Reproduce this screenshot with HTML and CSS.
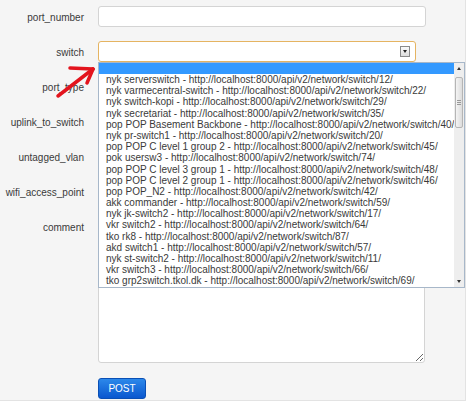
FILE: index.html
```html
<!DOCTYPE html>
<html>
<head>
<meta charset="utf-8">
<link rel="stylesheet" href="styles.css">
</head>
<body>
<div class="panel">
  <form class="form">
    <div class="row"><label class="lbl">port_number</label><input class="input" type="text"></div>
    <div class="row"><label class="lbl">switch</label>
      <div class="select-wrap">
        <div class="select"><span class="select-btn"></span></div>
        <div class="dropdown">
          <div class="options">
            <div class="opt sel">&nbsp;</div>
            <div class="opt">nyk serverswitch - http://localhost:8000/api/v2/network/switch/12/</div>
            <div class="opt">nyk varmecentral-switch - http://localhost:8000/api/v2/network/switch/22/</div>
            <div class="opt">nyk switch-kopi - http://localhost:8000/api/v2/network/switch/29/</div>
            <div class="opt">nyk secretariat - http://localhost:8000/api/v2/network/switch/35/</div>
            <div class="opt">pop POP Basement Backbone - http://localhost:8000/api/v2/network/switch/40/</div>
            <div class="opt">nyk pr-switch1 - http://localhost:8000/api/v2/network/switch/20/</div>
            <div class="opt">pop POP C level 1 group 2 - http://localhost:8000/api/v2/network/switch/45/</div>
            <div class="opt">pok usersw3 - http://localhost:8000/api/v2/network/switch/74/</div>
            <div class="opt">pop POP C level 3 group 1 - http://localhost:8000/api/v2/network/switch/48/</div>
            <div class="opt">pop POP C level 2 group 1 - http://localhost:8000/api/v2/network/switch/46/</div>
            <div class="opt">pop POP_N2 - http://localhost:8000/api/v2/network/switch/42/</div>
            <div class="opt">akk commander - http://localhost:8000/api/v2/network/switch/59/</div>
            <div class="opt">nyk jk-switch2 - http://localhost:8000/api/v2/network/switch/17/</div>
            <div class="opt">vkr switch2 - http://localhost:8000/api/v2/network/switch/64/</div>
            <div class="opt">tko rk8 - http://localhost:8000/api/v2/network/switch/87/</div>
            <div class="opt">akd switch1 - http://localhost:8000/api/v2/network/switch/57/</div>
            <div class="opt">nyk st-switch2 - http://localhost:8000/api/v2/network/switch/11/</div>
            <div class="opt">vkr switch3 - http://localhost:8000/api/v2/network/switch/66/</div>
            <div class="opt">tko grp2switch.tkol.dk - http://localhost:8000/api/v2/network/switch/69/</div>
          </div>
          <div class="scrollbar">
            <span class="sb-arrow up"></span>
            <span class="sb-thumb"><span class="grip"></span></span>
            <span class="sb-arrow down"></span>
          </div>
        </div>
      </div>
    </div>
    <div class="row"><label class="lbl">port_type</label><input class="input" type="text"></div>
    <div class="row"><label class="lbl">uplink_to_switch</label><input class="input" type="text"></div>
    <div class="row"><label class="lbl">untagged_vlan</label><input class="input" type="text"></div>
    <div class="row"><label class="lbl">wifi_access_point</label><input class="input" type="text"></div>
    <div class="row row-comment"><label class="lbl">comment</label><textarea class="textarea"></textarea></div>
    <div class="row row-submit"><span class="lbl"></span><button class="post" type="button">POST</button></div>
  </form>
</div>
<svg class="annot" width="474" height="403" viewBox="0 0 474 403">
  <g stroke="#e3141d" stroke-width="3.5" stroke-linecap="round" fill="none">
    <line x1="58" y1="96" x2="93" y2="69"/>
    <line x1="93" y1="69" x2="70" y2="68"/>
    <line x1="93" y1="69" x2="87" y2="83"/>
  </g>
</svg>
</body>
</html>
```
FILE: styles.css
```css
body {
  margin: 0;
  background: #fff;
  font-family: "Liberation Sans", Arial, sans-serif;
  position: relative;
}
.panel {
  width: 466px;
  height: 401px;
  box-sizing: border-box;
  background: #f5f5f5;
  border-right: 1px solid #e3e3e3;
  border-bottom: 1px solid #e3e3e3;
  padding-top: 6px;
}
.form {
  display: flex;
  flex-direction: column;
  gap: 14px;
}
.row {
  display: flex;
  align-items: flex-start;
}
.row-submit {
  margin-top: 1px;
}
.lbl {
  width: 84px;
  margin-right: 14px;
  text-align: right;
  font-size: 10px;
  line-height: 21px;
  height: 21px;
  padding-top: 1px;
  box-sizing: border-box;
  color: #3a3a3a;
  flex: none;
}
.input {
  width: 328px;
  height: 21px;
  box-sizing: border-box;
  border: 1px solid #d4d4d4;
  border-radius: 3px;
  background: #fff;
  margin: 0;
  padding: 0;
}
.select-wrap {
  position: relative;
  width: 318px;
  height: 21px;
}
.select {
  height: 21px;
  box-sizing: border-box;
  border: 1px solid #e5b462;
  border-radius: 3px;
  background: #fff;
  display: flex;
  justify-content: flex-end;
  align-items: center;
  padding-right: 5px;
}
.select-btn {
  width: 10px;
  height: 11px;
  box-sizing: border-box;
  border: 1px solid #8a8a8a;
  background: linear-gradient(#fafafa, #dcdcdc);
  display: flex;
  align-items: center;
  justify-content: center;
}
.select-btn::after {
  content: "";
  border-left: 2.5px solid transparent;
  border-right: 2.5px solid transparent;
  border-top: 3px solid #222;
}
.dropdown {
  position: absolute;
  top: 21px;
  left: 0;
  width: 367px;
  height: 226px;
  box-sizing: border-box;
  border: 1px solid #a7b7c9;
  background: #fff;
  display: flex;
  z-index: 2;
}
.options {
  flex: 1;
  overflow: hidden;
}
.opt {
  font-size: 10px;
  height: 11.2px;
  line-height: 11.2px;
  padding-left: 7px;
  color: #3a3a3a;
  white-space: nowrap;
}
.opt.sel {
  background: #3399ff;
  height: 11px;
}
.scrollbar {
  width: 10px;
  background: #eeeeee;
  display: flex;
  flex-direction: column;
  align-items: center;
  flex: none;
}
.sb-arrow {
  height: 11px;
  width: 10px;
  display: flex;
  align-items: center;
  justify-content: center;
  flex: none;
}
.sb-arrow::after {
  content: "";
  border-left: 2px solid transparent;
  border-right: 2px solid transparent;
}
.sb-arrow.up::after {
  border-bottom: 3px solid #333;
}
.sb-arrow.down::after {
  border-top: 3px solid #333;
}
.sb-arrow.down {
  margin-top: auto;
}
.sb-thumb {
  margin-top: 3px;
  width: 8px;
  height: 51px;
  box-sizing: border-box;
  border: 1px solid #b5b5b5;
  border-radius: 2px;
  background: linear-gradient(90deg, #f4f4f4, #dcdcdc);
  display: flex;
  align-items: center;
  justify-content: center;
}
.grip {
  width: 4px;
  height: 5px;
  background: repeating-linear-gradient(#999 0 1px, transparent 1px 2px);
}
.textarea {
  width: 327px;
  height: 147px;
  box-sizing: border-box;
  border: 1px solid #d4d4d4;
  border-radius: 3px;
  background: #fff;
  margin: 0;
  font-family: inherit;
}
.post {
  width: 48px;
  height: 21px;
  box-sizing: border-box;
  border: 1px solid #0a4fb5;
  border-radius: 3px;
  background: linear-gradient(#2c88ea, #0a57cf);
  color: #fff;
  font-family: inherit;
  font-size: 10px;
  padding: 0;
}
.annot {
  position: absolute;
  top: 0;
  left: 0;
  pointer-events: none;
  z-index: 3;
}
```
